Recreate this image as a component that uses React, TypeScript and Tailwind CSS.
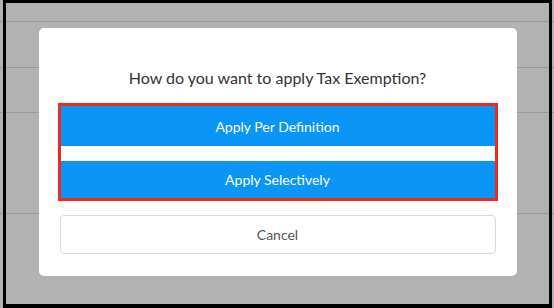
export default function App() {
  const rows = [22, 46, 45, 101];

  return (
    <div className="relative w-[554px] h-[308px] overflow-hidden bg-white font-['Lato','Noto_Sans',sans-serif]">
      {/* page behind the modal */}
      <div className="flex flex-col">
        {rows.map((h, i) => (
          <div key={i} className="border-b border-[#dbdbdb]" style={{ height: h }} />
        ))}
      </div>
      <div className="absolute left-[3px] top-0 w-[549px] h-[308px] border-[3px] border-b-[4px] border-black" />

      {/* overlay */}
      <div className="absolute inset-0 flex justify-center items-start pt-[28px] pl-[1px] bg-[rgba(0,0,0,0.3)]">
        <div className="w-[478px] h-[248px] bg-white rounded-[5px] px-[19px] pt-[38px] pb-[22px] flex flex-col">
          <h2 className="text-center text-[16px] leading-[24px] text-[#333]">
            How do you want to apply Tax Exemption?
          </h2>
          <div className="mt-[13px] border-[3px] border-[#ee2a1e] flex flex-col">
            <button className="h-[40px] bg-[#0b95f7] text-white text-[14px]">Apply Per Definition</button>
            <div className="h-[15px] bg-white" />
            <button className="h-[37px] bg-[#0b95f7] text-white text-[14px]">Apply Selectively</button>
          </div>
          <button className="mt-[14px] mx-[2px] h-[39px] border border-[#d5d9e0] rounded-[4px] bg-white text-[14px] text-[#555]">
            Cancel
          </button>
        </div>
      </div>
    </div>
  );
}
